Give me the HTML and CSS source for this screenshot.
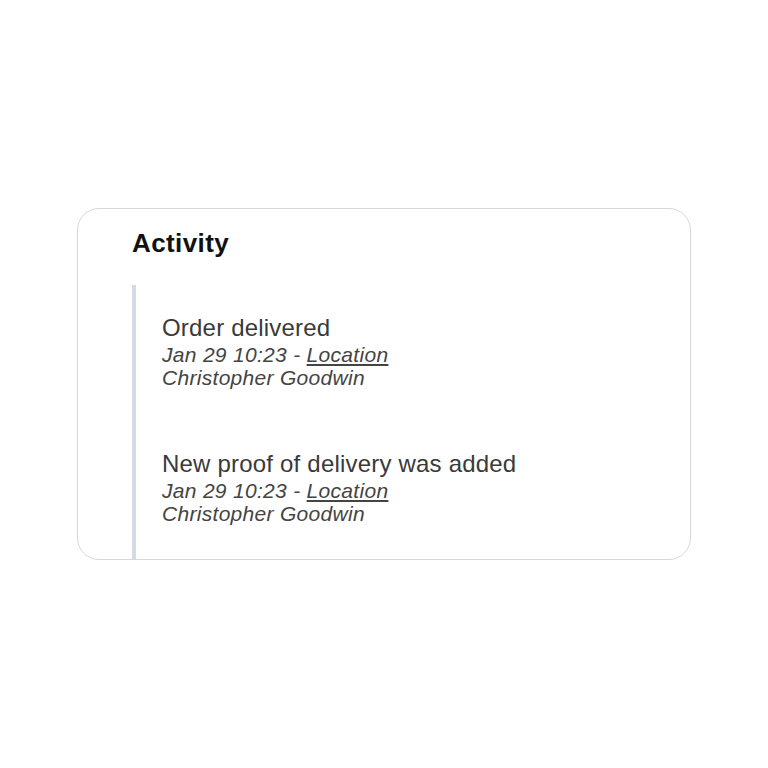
FILE: index.html
```html
<!DOCTYPE html>
<html lang="en">
<head>
<meta charset="utf-8">
<title>Activity</title>
<link rel="stylesheet" href="styles.css">
</head>
<body>
<section class="card">
  <h2 class="card-title">Activity</h2>
  <ul class="timeline">
    <li class="event">
      <div class="event-title">Order delivered</div>
      <div class="event-meta">Jan 29 10:23 - <a class="event-link" href="#">Location</a></div>
      <div class="event-meta">Christopher Goodwin</div>
    </li>
    <li class="event">
      <div class="event-title">New proof of delivery was added</div>
      <div class="event-meta">Jan 29 10:23 - <a class="event-link" href="#">Location</a></div>
      <div class="event-meta">Christopher Goodwin</div>
    </li>
  </ul>
</section>
</body>
</html>
```

FILE: styles.css
```css
html, body {
  margin: 0;
  padding: 0;
  background: #ffffff;
}

body {
  height: 100vh;
  display: flex;
  align-items: center;
  justify-content: center;
  font-family: "Liberation Sans", Arial, sans-serif;
}

.card {
  box-sizing: border-box;
  width: 614px;
  height: 352px;
  border: 1px solid #d8d8d8;
  border-radius: 22px;
  padding: 19px 0 0 54px;
  display: flex;
  flex-direction: column;
  overflow: hidden;
}

.card-title {
  margin: 0;
  font-size: 26px;
  line-height: 30px;
  font-weight: 700;
  color: #111111;
  letter-spacing: 0.4px;
}

.timeline {
  list-style: none;
  margin: 27px 0 0 0;
  padding: 28px 0 0 26px;
  border-left: 4px solid #d3d9e7;
  flex: 1;
  display: flex;
  flex-direction: column;
  gap: 60px;
}

.event {
  display: flex;
  flex-direction: column;
}

.event-title {
  font-size: 24px;
  line-height: 30px;
  color: #3a3a3a;
  letter-spacing: 0.2px;
}

.event-meta {
  font-size: 21px;
  line-height: 23px;
  font-style: italic;
  color: #444444;
  letter-spacing: 0.3px;
}

.event-link {
  color: inherit;
  text-decoration: underline;
}
```
